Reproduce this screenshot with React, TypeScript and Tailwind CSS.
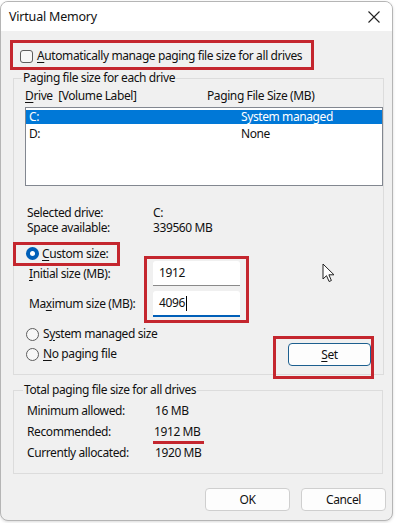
import React from "react"

const font = "font-['Noto_Sans',sans-serif]"

function Radio({ checked }: { checked?: boolean }) {
  if (checked) {
    return (
      <span className="flex h-[13px] w-[13px] items-center justify-center rounded-full bg-[#005fb8]">
        <span className="h-[5px] w-[5px] rounded-full bg-white" />
      </span>
    )
  }
  return <span className="h-[13px] w-[13px] rounded-full border border-[#5d5d5d] bg-[#f7f7f7]" />
}

function Button({ children, primary }: { children: React.ReactNode; primary?: boolean }) {
  return (
    <div
      className={
        "flex h-[23px] items-center justify-center rounded-[4px] border bg-[#fdfdfd] text-[12px] " +
        (primary ? "border-[#1c5f8f] w-[83px]" : "border-[#cfcfcf] w-[85px]")
      }
    >
      {children}
    </div>
  )
}

export default function App() {
  return (
    <div className={`h-[523px] w-[396px] bg-white pt-[1px] text-[12px] leading-[16px] text-[#111] ${font}`}>
      <div className="relative flex h-[520px] w-[393px] flex-col overflow-hidden rounded-[8px] border border-[#b5b5b5] bg-[#f0f0f0] shadow-[0_1px_3px_rgba(0,0,0,0.15)]">
        {/* title bar */}
        <div className="flex h-[29px] shrink-0 items-center justify-between bg-white pl-[8px] pr-[7px]">
          <span className="text-[12.5px] tracking-[-0.2px]">Virtual Memory</span>
          <svg width="24" height="24" viewBox="0 0 24 24" className="mr-[-1px]">
            <path d="M6.5 6.5l11 11M17.5 6.5l-11 11" stroke="#222" strokeWidth="1.1" fill="none" />
          </svg>
        </div>

        <div className="flex flex-col pl-[12px] tracking-[-0.4px]">
          {/* auto manage */}
          <div className="mt-[15px] flex h-[20px] items-center pl-[7px]">
            <span className="h-[13px] w-[13px] rounded-[3px] border border-[#5d5d5d] bg-[#f7f7f7]" />
            <span className="ml-[4px]">
              <u className="underline-offset-2">A</u>utomatically manage paging file size for all drives
            </span>
          </div>

          {/* group 1 */}
          <fieldset className="mt-[4px] w-[370px] border border-[#dcdcdc]">
            <legend className="ml-[8px] px-[1px] leading-[16px]">Paging file size for each drive</legend>
            <div className="mt-[2px] flex h-[16px] items-center pl-[11px]">
              <span className="w-[182px]">
                <u className="underline-offset-2">D</u>rive&nbsp; [Volume Label]
              </span>
              <span>Paging File Size (MB)</span>
            </div>
            <div className="ml-[11px] mt-[3px] h-[79px] w-[358px] border border-[#828790] bg-white pt-[2px]">
              <div className="flex h-[14px] items-center bg-[#0078d7] pl-[3px] leading-[14px] text-white">
                <span className="w-[212px]">C:</span>
                <span>System managed</span>
              </div>
              <div className="mt-[2px] flex h-[15px] items-center pl-[3px] leading-[14px]">
                <span className="w-[212px]">D:</span>
                <span>None</span>
              </div>
            </div>

            <div className="mt-[19px] flex h-[15px] items-center pl-[13px]">
              <span className="w-[126px]">Selected drive:</span>
              <span>C:</span>
            </div>
            <div className="flex h-[16px] items-center pl-[13px]">
              <span className="w-[126px]">Space available:</span>
              <span>339560 MB</span>
            </div>

            <div className="mt-[10px] flex h-[15px] items-center gap-[3px] pl-[12px]">
              <Radio checked />
              <span>
                <u className="underline-offset-2">C</u>ustom size:
              </span>
            </div>
            <div className="flex h-[25px] items-center pl-[15px]">
              <span className="w-[124px]">
                <u className="underline-offset-2">I</u>nitial size (MB):
              </span>
              <div className="flex h-[25px] w-[87px] items-center rounded-t-[3px] border-b border-[#8a8a8a] bg-white pl-[6px]">
                1912
              </div>
            </div>
            <div className="mt-[5px] flex h-[26px] items-center pl-[15px]">
              <span className="w-[124px]">
                Ma<u className="underline-offset-2">x</u>imum size (MB):
              </span>
              <div className="flex h-[26px] w-[87px] items-center rounded-t-[3px] border-b-2 border-[#005fb8] bg-white pl-[6px]">
                4096<span className="ml-[1px] h-[15px] w-[1px] bg-black" />
              </div>
            </div>

            <div className="mt-[9px] flex items-start justify-between pb-[8px] pl-[12px] pr-[12px]">
              <div className="flex flex-col gap-[4px]">
                <div className="flex h-[16px] items-center gap-[4px]">
                  <Radio />
                  <span>
                    S<u className="underline-offset-2">y</u>stem managed size
                  </span>
                </div>
                <div className="flex h-[16px] items-center gap-[4px]">
                  <Radio />
                  <span>
                    <u className="underline-offset-2">N</u>o paging file
                  </span>
                </div>
              </div>
              <div className="mt-[17px]">
                <Button primary>
                  <u className="underline-offset-2">S</u>et
                </Button>
              </div>
            </div>
          </fieldset>

          {/* group 2 */}
          <fieldset className="mt-[7px] w-[370px] border border-[#dcdcdc] pb-[10px]">
            <legend className="ml-[9px] px-[1px] leading-[16px]">Total paging file size for all drives</legend>
            <div className="mt-[2px] flex h-[21px] items-center pl-[13px]">
              <span className="w-[128px]">Minimum allowed:</span>
              <span>16 MB</span>
            </div>
            <div className="flex h-[21px] items-center pl-[13px]">
              <span className="w-[127px]">Recommended:</span>
              <span className="relative">
                1912 MB
                <span className="absolute left-[-1px] right-[-4px] top-[17px] h-[3px] bg-[#c4262e]" />
              </span>
            </div>
            <div className="flex h-[21px] items-center pl-[13px]">
              <span className="w-[128px]">Currently allocated:</span>
              <span>1920 MB</span>
            </div>
          </fieldset>

          <div className="mt-[14px] flex w-[373px] justify-end gap-[11px]">
            <Button>OK</Button>
            <Button>Cancel</Button>
          </div>
        </div>

        {/* annotation boxes */}
        <div className="pointer-events-none absolute left-[9px] top-[38px] h-[30px] w-[304px] border-[3px] border-[#c4262e]" />
        <div className="pointer-events-none absolute left-[12px] top-[240px] h-[24px] w-[107px] border-[3px] border-[#c4262e]" />
        <div className="pointer-events-none absolute left-[143px] top-[254px] h-[67px] w-[105px] border-[3px] border-[#c4262e]" />
        <div className="pointer-events-none absolute left-[272px] top-[334px] h-[43px] w-[101px] border-[3px] border-[#c4262e]" />

        {/* mouse pointer */}
        <svg className="pointer-events-none absolute left-[321px] top-[261px]" width="14" height="20" viewBox="0 0 14 20">
          <path d="M1 1v15l3.5-3.3 2.6 5.8 2.3-1-2.5-5.7H12z" fill="#fff" stroke="#222" strokeWidth="1" strokeLinejoin="round" />
        </svg>
      </div>
    </div>
  )
}
